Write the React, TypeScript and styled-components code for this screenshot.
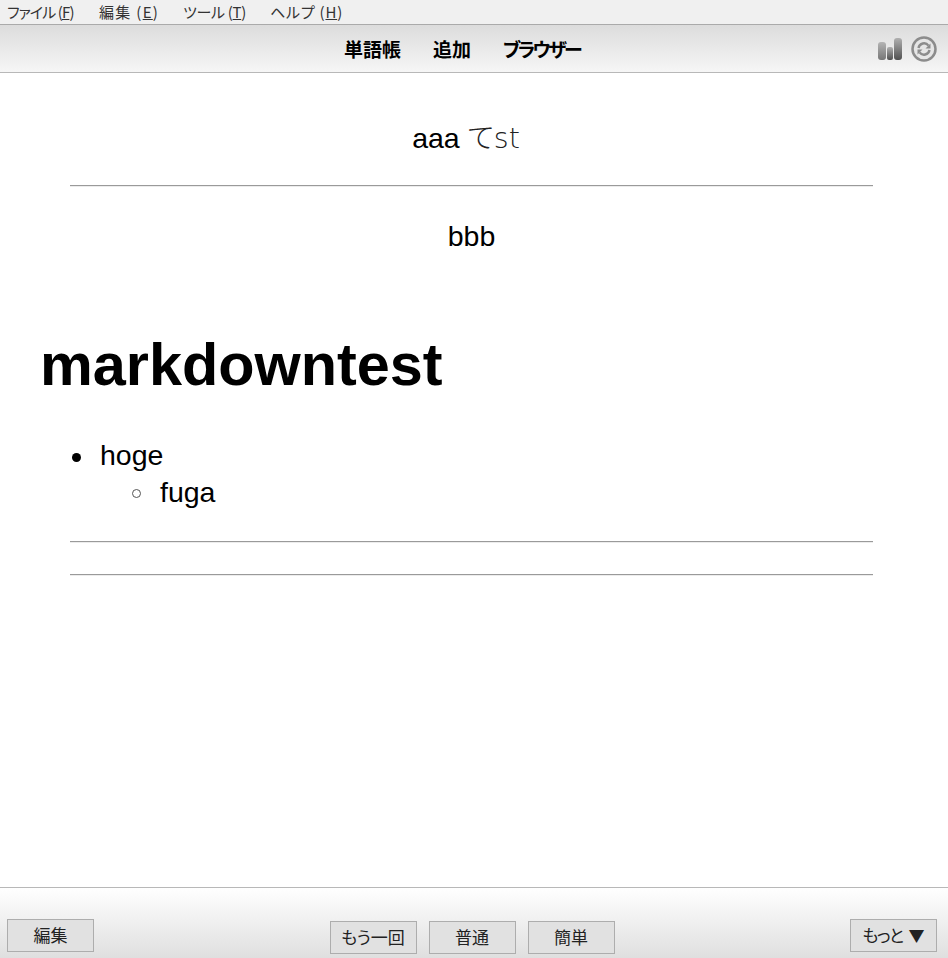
import React from 'react';
import styled, { createGlobalStyle } from 'styled-components';

const Global = createGlobalStyle`
  html, body { margin: 0; padding: 0; height: 100%; background: #fff; overflow: hidden; }
  #root { height: 100%; }
`;

const Page = styled.div`
  height: 958px;
  display: flex;
  flex-direction: column;
  font-family: "Liberation Sans", "Noto Sans CJK JP", sans-serif;
  color: #000;
`;

const MenuBar = styled.div`
  height: 25px;
  box-sizing: border-box;
  flex: none;
  display: flex;
  padding: 0 0 0 7px;
  align-items: center;
  background: #f0f0f0;
  font-family: "Noto Sans CJK JP", sans-serif;
  font-feature-settings: "palt";
  font-size: 15px;
  line-height: 18px;
  color: #333;
  border-bottom: 1px solid #aaa;
`;

const MenuItem = styled.span<{ $width: number; $spacing: number }>`
  width: ${p => p.$width}px;
  letter-spacing: ${p => p.$spacing}px;
  white-space: nowrap;
`;

const MenuKey = styled.span`
  text-decoration: underline;
`;

const TopBar = styled.div`
  height: 48px;
  box-sizing: border-box;
  flex: none;
  position: relative;
  display: flex;
  justify-content: center;
  align-items: center;
  gap: 32px;
  padding-right: 24px;
  background: linear-gradient(#dcdcdc, #f6f6f6);
  border-bottom: 1px solid #b8b8b8;
  font-family: "Noto Sans CJK JP", sans-serif;
  font-feature-settings: "palt";
  font-size: 19px;
  line-height: 20px;
  font-weight: 700;
`;

const KanaLink = styled.span`
  letter-spacing: -2.6px;
`;

const Stats = styled.div`
  position: absolute;
  right: 11px;
  top: 11px;
  display: flex;
  align-items: center;
  gap: 8px;
`;

const Content = styled.main`
  flex: 1;
  padding-right: 5px;
  font-size: 28.5px;
  line-height: 33px;
`;

const Question = styled.div`
  text-align: center;
  padding: 49px 11px 0 0;
  height: 112px;
  box-sizing: border-box;
`;

const Thin = styled.span`
  font-family: "DejaVu Sans", "Noto Sans CJK JP", sans-serif;
  font-feature-settings: "palt";
  font-weight: 200;
  color: #222;
`;

const Rule = styled.hr`
  margin: 0 70px;
  border: 0;
  border-top: 1px solid #9a9a9a;
  border-bottom: 1px solid #ececec;
`;

const Answer = styled.div`
  text-align: center;
  margin-top: 33px;
`;

const Heading = styled.h1`
  margin: 77px 0 0 40px;
  font-size: 59.4px;
  line-height: 69px;
  font-weight: 700;
`;

const List = styled.ul`
  margin: 38px 0 30px 0;
  padding: 0 0 0 100px;
  list-style: none;
  line-height: 37px;
`;

const SubList = styled.ul`
  margin: 0;
  padding: 0 0 0 60px;
  list-style: none;
`;

const Item = styled.li`
  position: relative;
  &::before {
    content: "";
    position: absolute;
    left: -28px;
    top: 16px;
    width: 9px;
    height: 9px;
    border-radius: 50%;
    background: #000;
  }
`;

const SubItem = styled.li`
  position: relative;
  &::before {
    content: "";
    position: absolute;
    left: -28px;
    top: 15px;
    width: 9px;
    height: 9px;
    box-sizing: border-box;
    border-radius: 50%;
    border: 1.5px solid #555;
  }
`;

const GapRule = styled(Rule)`
  margin-top: 31px;
`;

const BottomBar = styled.footer`
  height: 71px;
  box-sizing: border-box;
  flex: none;
  display: grid;
  grid-template-columns: 1fr auto 1fr;
  align-items: flex-start;
  padding: 31px 11px 0 7px;
  background: linear-gradient(#fff, #dfdfdf);
  border-top: 1px solid #b8b8b8;
`;

const Center = styled.div`
  display: flex;
  gap: 12px;
  margin-top: 2px;
`;

const Right = styled.div`
  display: flex;
  justify-content: flex-end;
`;

const Button = styled.button`
  width: 87px;
  height: 33px;
  box-sizing: border-box;
  padding: 0 0 3px;
  background: #e1e1e1;
  border: 1px solid #adadad;
  font-family: "Noto Sans CJK JP", sans-serif;
  font-feature-settings: "palt";
  font-size: 17px;
  line-height: 1;
  color: #222;
`;

const MoreLabel = styled.span`
  letter-spacing: -1.5px;
  margin-right: 6px;
`;

const MoreArrow = styled.span`
  font-size: 16px;
`;

export default function App() {
  return (
    <Page>
      <Global />
      <MenuBar>
        <MenuItem $width={92} $spacing={-0.9}>ファイル (<MenuKey>F</MenuKey>)</MenuItem>
        <MenuItem $width={84} $spacing={1.3}>編集 (<MenuKey>E</MenuKey>)</MenuItem>
        <MenuItem $width={87} $spacing={-0.3}>ツール (<MenuKey>T</MenuKey>)</MenuItem>
        <MenuItem $width={80} $spacing={0.8}>ヘルプ (<MenuKey>H</MenuKey>)</MenuItem>
      </MenuBar>
      <TopBar>
        <span>単語帳</span>
        <span>追加</span>
        <KanaLink>ブラウザー</KanaLink>
        <Stats>
          <svg width="25" height="25" viewBox="0 0 25 25">
            <defs>
              <linearGradient id="barA" x1="0" y1="0" x2="0" y2="1">
                <stop offset="0" stopColor="#b4b4b4" />
                <stop offset="1" stopColor="#767676" />
              </linearGradient>
              <linearGradient id="barB" x1="0" y1="0" x2="0" y2="1">
                <stop offset="0" stopColor="#b0b0b0" />
                <stop offset="1" stopColor="#505050" />
              </linearGradient>
            </defs>
            <rect x="0" y="5" width="8" height="18" rx="3" fill="url(#barA)" />
            <rect x="9" y="10" width="6" height="13" rx="2" fill="url(#barB)" />
            <rect x="16" y="1" width="8" height="22" rx="3" fill="url(#barB)" />
          </svg>
          <svg width="26" height="26" viewBox="0 0 26 26">
            <circle cx="13" cy="13" r="11.500" fill="#e6e6e6" stroke="#8c8c8c" strokeWidth="2.500" />
            <path d="M7.500 12A5.600 5.600 0 0 1 17.500 9.600" fill="none" stroke="#8c8c8c" strokeWidth="2.400" />
            <path d="M18.500 14A5.600 5.600 0 0 1 8.500 16.400" fill="none" stroke="#8c8c8c" strokeWidth="2.400" />
            <path d="M19.500 7.500V12.500H14.500z" fill="#8c8c8c" />
            <path d="M6.500 18.500V13.500H11.500z" fill="#8c8c8c" />
          </svg>
        </Stats>
      </TopBar>
      <Content>
        <Question>aaa <Thin>てst</Thin></Question>
        <Rule />
        <Answer>bbb</Answer>
        <Heading>markdowntest</Heading>
        <List>
          <Item>hoge
            <SubList><SubItem>fuga</SubItem></SubList>
          </Item>
        </List>
        <Rule />
        <GapRule />
      </Content>
      <BottomBar>
        <div><Button>編集</Button></div>
        <Center>
          <Button>もう一回</Button>
          <Button>普通</Button>
          <Button>簡単</Button>
        </Center>
        <Right><Button><MoreLabel>もっと</MoreLabel><MoreArrow>▼</MoreArrow></Button></Right>
      </BottomBar>
    </Page>
  );
}
